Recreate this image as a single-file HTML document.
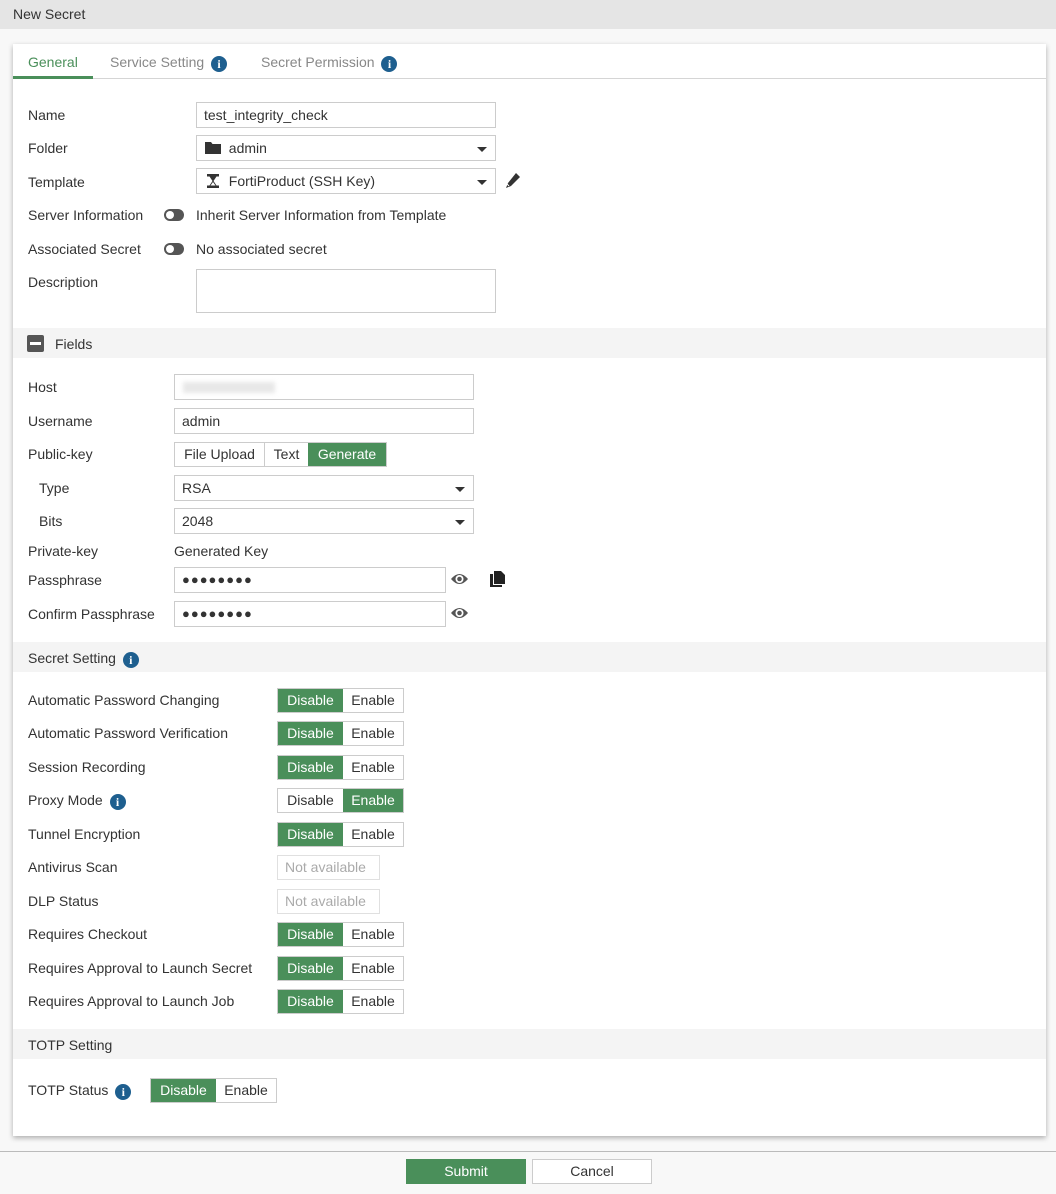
<!DOCTYPE html>
<html><head><meta charset="utf-8"><style>
*{box-sizing:border-box;margin:0;padding:0}
body{width:1056px;height:1194px;background:#f8f8f8;font-family:"Liberation Sans",sans-serif;font-size:14px;color:#333;position:relative;overflow:hidden}
.a{position:absolute}
.hdr{left:0;top:0;width:1056px;height:29px;background:#e5e5e5;padding:6px 13px;font-size:14px;color:#333}
.card{left:13px;top:44px;width:1033px;height:1092px;background:#fff;box-shadow:0 2px 5px rgba(0,0,0,.3)}
.lbl{position:absolute;font-size:14px;color:#333;line-height:18px}
.inp{position:absolute;border:1px solid #ccc;height:26px;background:#fff;padding:4px 7px;line-height:16px;font-size:14px}
.caret{position:absolute;right:8px;top:11px;border-left:5px solid transparent;border-right:5px solid transparent;border-top:5px solid #333}
.band{position:absolute;left:0;width:1033px;background:#f4f4f4;height:30px}
.tg{position:absolute;height:25px;display:flex;border:1px solid #ccc;font-size:14px;line-height:23px}
.tg span{background:#fff;color:#333;text-align:center;display:block}
.tg span.d{width:65px}.tg span.e{width:60px}
.tg span.on{background:#4a8f5a;color:#fff}
.na{position:absolute;height:25px;border:1px solid #e0e0e0;color:#aaa;line-height:23px;padding:0 7px;width:103px}
.info{display:inline-block;width:16px;height:16px;border-radius:50%;background:#1e5f8f;color:#fff;font-size:12px;font-weight:bold;text-align:center;line-height:16px;font-family:"Liberation Serif",serif;vertical-align:-1px;margin-left:3px}
.sw{position:absolute;width:20px;height:12px;border-radius:6px;background:#555}
.sw:after{content:"";position:absolute;left:2px;top:2px;width:8px;height:8px;border-radius:50%;background:#fff}
.dots{letter-spacing:1px;font-size:13px}
</style></head><body>
<div class="a hdr">New Secret</div>
<div class="a card">
 <div class="a" style="left:0;top:34px;width:1033px;height:1px;background:#d5d5d5"></div>
 <div class="a" style="left:0;top:32px;width:80px;height:3px;background:#4a8f5a"></div>
 <div class="lbl" style="left:15px;top:9px;color:#4a8f5a">General</div>
 <div class="lbl" style="left:97px;top:9px;color:#888">Service Setting&nbsp;<span class="info">i</span></div>
 <div class="lbl" style="left:248px;top:9px;color:#888">Secret Permission&nbsp;<span class="info">i</span></div>

 <div class="lbl" style="left:15px;top:62px">Name</div>
 <div class="inp" style="left:183px;top:58px;width:300px">test_integrity_check</div>
 <div class="lbl" style="left:15px;top:95px">Folder</div>
 <div class="inp" style="left:183px;top:91px;width:300px;padding-left:8px"><svg width="16" height="13" viewBox="0 0 16 13" style="vertical-align:-1px"><path d="M0 1h6l1.5 2H16v10H0z" fill="#333"/></svg>&nbsp; admin<div class="caret"></div></div>
 <div class="lbl" style="left:15px;top:129px">Template</div>
 <div class="inp" style="left:183px;top:124px;width:300px;padding-left:8px"><svg width="16" height="16" viewBox="0 0 16 16" style="vertical-align:-3px"><path d="M2 1h12v2.5H11.5L8.5 8l3 4.5H14V15H2v-2.5h2.5l3-4.5-3-4.5H2z" fill="#333"/><path d="M5.5 12.5h5L8 9z" fill="#fff"/></svg>&nbsp; FortiProduct (SSH Key)<div class="caret"></div></div>
 <svg class="a" style="left:491px;top:128px" width="17" height="17" viewBox="0 0 17 17"><path d="M12 1l4 4-9 9-5 2 2-5z" fill="#333"/><path d="M3 12l2 2" stroke="#fff"/></svg>
 <div class="lbl" style="left:15px;top:162px">Server Information</div>
 <div class="sw" style="left:151px;top:165px"></div>
 <div class="lbl" style="left:183px;top:162px">Inherit Server Information from Template</div>
 <div class="lbl" style="left:15px;top:196px">Associated Secret</div>
 <div class="sw" style="left:151px;top:199px"></div>
 <div class="lbl" style="left:183px;top:196px">No associated secret</div>
 <div class="lbl" style="left:15px;top:229px">Description</div>
 <div class="inp" style="left:183px;top:225px;width:300px;height:44px"></div>

 <div class="band" style="top:284px"></div>
 <div class="a" style="left:14px;top:291px;width:17px;height:17px;background:#555;border-radius:2px"><div class="a" style="left:3px;top:7px;width:11px;height:3px;background:#fff"></div></div>
 <div class="lbl" style="left:42px;top:291px">Fields</div>

 <div class="lbl" style="left:15px;top:334px">Host</div>
 <div class="inp" style="left:161px;top:330px;width:300px"><div class="a" style="left:8px;top:7px;width:92px;height:11px;background:#e8e8e8;filter:blur(2px)"></div></div>
 <div class="lbl" style="left:15px;top:368px">Username</div>
 <div class="inp" style="left:161px;top:364px;width:300px">admin</div>
 <div class="lbl" style="left:15px;top:401px">Public-key</div>
 <div class="tg" style="left:161px;top:398px"><span style="width:89px">File Upload</span><span style="width:44px;border-left:1px solid #ccc">Text</span><span class="on" style="width:78px">Generate</span></div>
 <div class="lbl" style="left:26px;top:435px">Type</div>
 <div class="inp" style="left:161px;top:431px;width:300px">RSA<div class="caret"></div></div>
 <div class="lbl" style="left:26px;top:468px">Bits</div>
 <div class="inp" style="left:161px;top:464px;width:300px">2048<div class="caret"></div></div>
 <div class="lbl" style="left:15px;top:498px">Private-key</div>
 <div class="lbl" style="left:161px;top:498px">Generated Key</div>
 <div class="lbl" style="left:15px;top:527px">Passphrase</div>
 <div class="inp dots" style="left:161px;top:523px;width:272px">●●●●●●●●</div>
 <svg class="a" style="left:437px;top:528px" width="19" height="14" viewBox="0 0 19 14"><path d="M1 7Q9.5-3 18 7Q9.5 17 1 7z" fill="#555"/><circle cx="9.5" cy="7" r="4" fill="#fff"/><circle cx="9.5" cy="7" r="2.3" fill="#555"/></svg>
 <svg class="a" style="left:477px;top:527px" width="15" height="16" viewBox="0 0 15 16"><path d="M4 0h7l4 4v9H4z" fill="#222"/><path d="M0 3h3v11h9v2H0z" fill="#222"/></svg>
 <div class="lbl" style="left:15px;top:561px">Confirm Passphrase</div>
 <div class="inp dots" style="left:161px;top:557px;width:272px">●●●●●●●●</div>
 <svg class="a" style="left:437px;top:562px" width="19" height="14" viewBox="0 0 19 14"><path d="M1 7Q9.5-3 18 7Q9.5 17 1 7z" fill="#555"/><circle cx="9.5" cy="7" r="4" fill="#fff"/><circle cx="9.5" cy="7" r="2.3" fill="#555"/></svg>

 <div class="band" style="top:598px"></div>
 <div class="lbl" style="left:15px;top:605px">Secret Setting&nbsp;<span class="info">i</span></div>

 <div class="lbl" style="left:15px;top:647px">Automatic Password Changing</div>
 <div class="tg" style="left:264px;top:644px"><span class="on d">Disable</span><span class="e">Enable</span></div>
 <div class="lbl" style="left:15px;top:680px">Automatic Password Verification</div>
 <div class="tg" style="left:264px;top:677px"><span class="on d">Disable</span><span class="e">Enable</span></div>
 <div class="lbl" style="left:15px;top:714px">Session Recording</div>
 <div class="tg" style="left:264px;top:711px"><span class="on d">Disable</span><span class="e">Enable</span></div>
 <div class="lbl" style="left:15px;top:747px">Proxy Mode&nbsp;<span class="info">i</span></div>
 <div class="tg" style="left:264px;top:744px"><span class="d">Disable</span><span class="on e">Enable</span></div>
 <div class="lbl" style="left:15px;top:781px">Tunnel Encryption</div>
 <div class="tg" style="left:264px;top:778px"><span class="on d">Disable</span><span class="e">Enable</span></div>
 <div class="lbl" style="left:15px;top:814px">Antivirus Scan</div>
 <div class="na" style="left:264px;top:811px">Not available</div>
 <div class="lbl" style="left:15px;top:848px">DLP Status</div>
 <div class="na" style="left:264px;top:845px">Not available</div>
 <div class="lbl" style="left:15px;top:881px">Requires Checkout</div>
 <div class="tg" style="left:264px;top:878px"><span class="on d">Disable</span><span class="e">Enable</span></div>
 <div class="lbl" style="left:15px;top:915px">Requires Approval to Launch Secret</div>
 <div class="tg" style="left:264px;top:912px"><span class="on d">Disable</span><span class="e">Enable</span></div>
 <div class="lbl" style="left:15px;top:948px">Requires Approval to Launch Job</div>
 <div class="tg" style="left:264px;top:945px"><span class="on d">Disable</span><span class="e">Enable</span></div>

 <div class="band" style="top:985px"></div>
 <div class="lbl" style="left:15px;top:992px">TOTP Setting</div>
 <div class="lbl" style="left:15px;top:1037px">TOTP Status&nbsp;<span class="info">i</span></div>
 <div class="tg" style="left:137px;top:1034px"><span class="on d">Disable</span><span class="e">Enable</span></div>
</div>
<div class="a" style="left:0;top:1151px;width:1056px;height:1px;background:#bbb"></div>
<div class="a" style="left:406px;top:1159px;width:120px;height:25px;background:#4a8f5a;color:#fff;text-align:center;line-height:25px">Submit</div>
<div class="a" style="left:532px;top:1159px;width:120px;height:25px;background:#fff;border:1px solid #ccc;text-align:center;line-height:23px">Cancel</div>
</body></html>
